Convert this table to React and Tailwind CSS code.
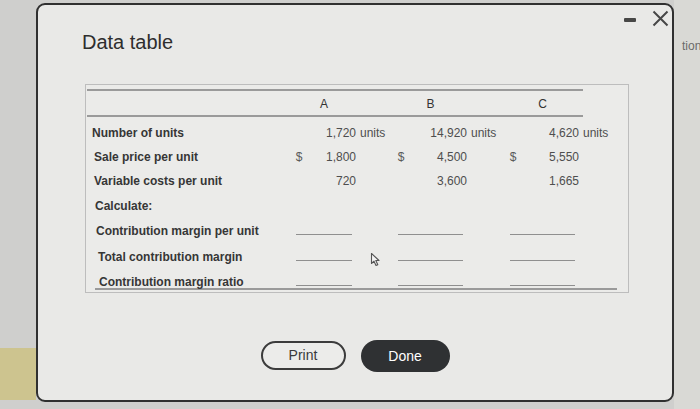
const rows = [
  { label: "Number of units", pl: "pl-0", a: "1,720", b: "14,920", c: "4,620", units: true },
  { label: "Sale price per unit", pl: "pl-[2px]", a: "1,800", b: "4,500", c: "5,550", dollar: true },
  { label: "Variable costs per unit", pl: "pl-[2px]", a: "720", b: "3,600", c: "1,665" },
];

const calc = [
  { label: "Contribution margin per unit", pl: "pl-[4px]", h: "h-[26px]" },
  { label: "Total contribution margin", pl: "pl-[6px]", h: "h-[26px]", cursor: true },
  { label: "Contribution margin ratio", pl: "pl-[7px]", h: "h-[24px]" },
];

const grid =
  "grid grid-cols-[200px_14px_50px_38px_14px_59px_39px_14px_59px_41px] items-center";

const Cursor = () => (
  <svg width="11" height="15" viewBox="0 0 11 15" className="ml-[14px] mt-[4px]">
    <path
      d="M1.5 1.5 L1.5 11.5 L4 9.2 L6 13.5 L7.8 12.7 L5.8 8.5 L9 8.5 Z"
      fill="#f4f4f4"
      stroke="#555"
      strokeWidth="1.1"
      strokeLinejoin="round"
    />
  </svg>
);

const Blank = () => <div className="mx-[4px] h-[8px] border-b border-[#8f8f8f]" />;

const App = () => {
  return (
    <main
      className="w-[700px] h-[409px] flex bg-[#cfcfcd] overflow-hidden"
      style={{ fontFamily: '"Liberation Sans", Arial, sans-serif' }}
    >
      <div className="w-[36px] flex flex-col">
        <div className="flex-1" />
        <div className="h-[52px] bg-[#cdc48f] mb-[9px]" />
      </div>

      <div className="mt-[3px] w-[638px] h-[399px] bg-[#e9e9e7] border-2 border-[#303030] rounded-[9px] flex flex-col">
        <div className="flex justify-between items-start">
          <h2 className="mt-[26px] pl-[44px] text-[20px] leading-[23px] text-[#2e2e2e]">
            Data table
          </h2>
          <div className="mt-[5px] mr-[3px] flex items-center gap-[16px]">
            <div className="w-[12px] h-[4px] bg-[#474747] rounded-[1px] mt-[3px]" />
            <svg width="17" height="17" viewBox="0 0 17 17">
              <path d="M1.5 1.5 L15.5 15.5 M15.5 1.5 L1.5 15.5" stroke="#474747" strokeWidth="2" />
            </svg>
          </div>
        </div>

        <div className="mt-[30px] ml-[47px] w-[544px] h-[209px] border border-[#bdbdbd] bg-[#ebebe9] pl-[6px] pt-[4px]">
          <div className="ml-[-5px] w-[496px] h-[2px] bg-[#9a9a9a]" />
          <div className={`${grid} h-[24px] pt-[2px] text-[12px] text-[#333]`}>
            <div />
            <div className="col-span-2 text-center">A</div>
            <div />
            <div className="col-span-2 text-center">B</div>
            <div />
            <div className="col-span-2 text-center">C</div>
          </div>
          <div className="ml-[-5px] w-[496px] h-[2px] bg-[#9a9a9a]" />

          <div className="mt-[4px] text-[12px]">
            {rows.map((r) => (
              <div key={r.label} className={`${grid} h-[24px]`}>
                <div className={`${r.pl} font-bold text-[#363636]`}>{r.label}</div>
                <div className="text-[#5a5a5a] text-center">{r.dollar ? "$" : ""}</div>
                <div className="text-right text-[#4e4e4e]">{r.a}</div>
                <div className="pl-[4px] text-[#4e4e4e]">{r.units ? "units" : ""}</div>
                <div className="text-[#5a5a5a] text-center">{r.dollar ? "$" : ""}</div>
                <div className="text-right text-[#4e4e4e]">{r.b}</div>
                <div className="pl-[4px] text-[#4e4e4e]">{r.units ? "units" : ""}</div>
                <div className="text-[#5a5a5a] text-center">{r.dollar ? "$" : ""}</div>
                <div className="text-right text-[#4e4e4e]">{r.c}</div>
                <div className="pl-[4px] text-[#4e4e4e]">{r.units ? "units" : ""}</div>
              </div>
            ))}
            <div className="h-[25px] flex items-center pl-[3px] font-bold text-[#363636]">
              Calculate:
            </div>
            {calc.map((r) => (
              <div key={r.label} className={`${grid} ${r.h}`}>
                <div className={`${r.pl} font-bold text-[#363636]`}>{r.label}</div>
                <div className="col-span-2">
                  <Blank />
                </div>
                <div>{r.cursor ? <Cursor /> : null}</div>
                <div className="col-span-2">
                  <Blank />
                </div>
                <div />
                <div className="col-span-2">
                  <Blank />
                </div>
              </div>
            ))}
          </div>
          <div className="ml-[3px] w-[522px] h-[2px] bg-[#9a9a9a] mt-[-6px]" />
        </div>

        <div className="mt-[47px] flex justify-center gap-[15px]">
          <button className="w-[85px] h-[29px] mt-[1px] rounded-full border-2 border-[#3c3c3c] text-[14px] text-[#3a3a3a] bg-[#ececea]">
            Print
          </button>
          <button className="w-[89px] h-[32px] rounded-full bg-[#2f3133] text-[14px] text-white">
            Done
          </button>
        </div>
      </div>

      <div className="flex-1 bg-[#d9d9d5] overflow-hidden">
        <p className="mt-[37px] pl-[8px] text-[12px] text-[#6a6a6a] whitespace-nowrap">tion</p>
      </div>
    </main>
  );
};

export default App;
